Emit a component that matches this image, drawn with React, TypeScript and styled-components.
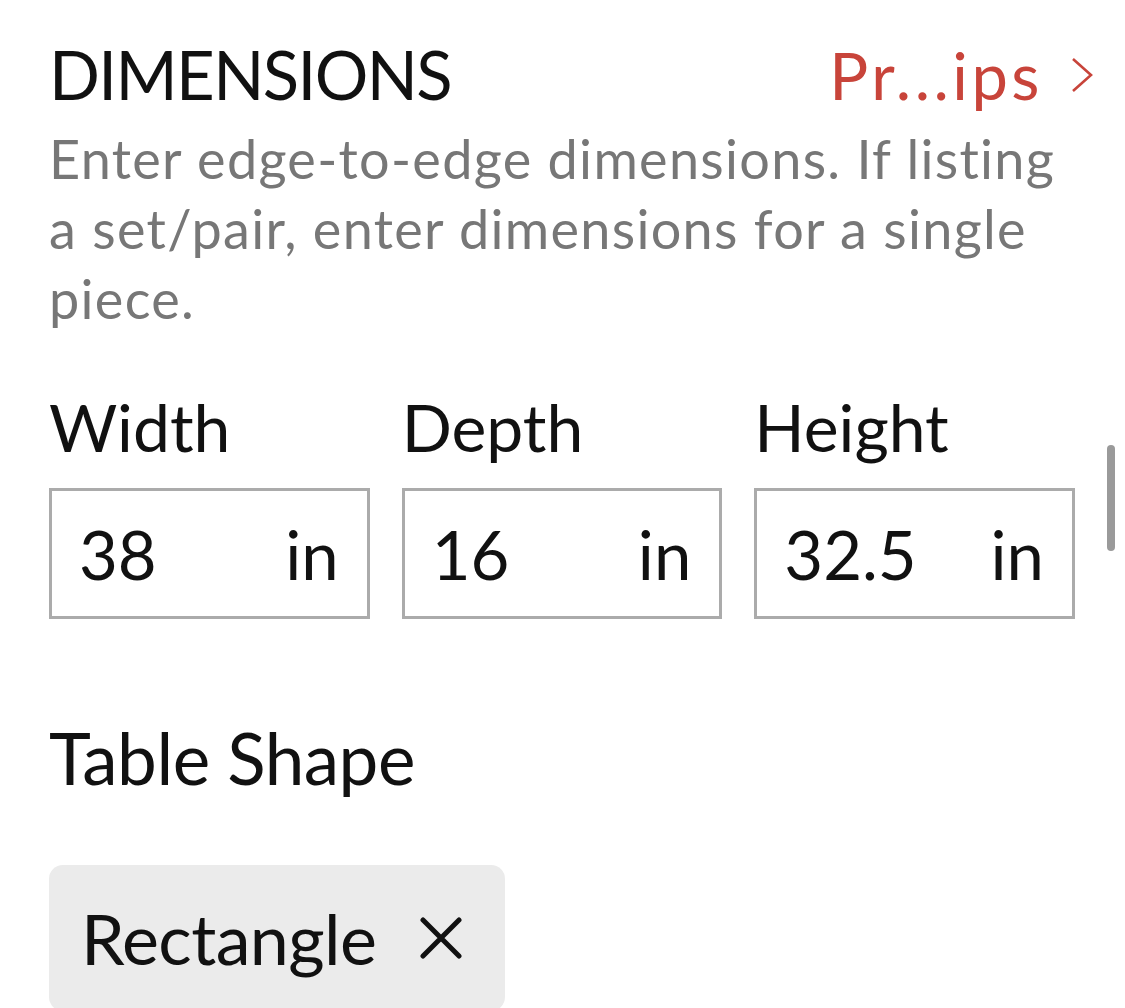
import React from "react";
import styled, { createGlobalStyle } from "styled-components";

const GlobalStyle = createGlobalStyle`
  html, body {
    margin: 0;
    padding: 0;
    background: #ffffff;
  }
  body {
    font-family: "Lato", "Noto Sans", sans-serif;
    color: #111111;
    overflow: hidden;
  }
`;

const Page = styled.div`
  position: relative;
  width: 1125px;
  height: 1008px;
  box-sizing: border-box;
  padding: 34px 50px 0 49px;
  overflow: hidden;
`;

const HeaderRow = styled.div`
  display: flex;
  justify-content: space-between;
  align-items: baseline;
`;

const Title = styled.h2`
  margin: 0;
  font-size: 67px;
  font-weight: 400;
  line-height: 80px;
  letter-spacing: -1.6px;
  color: #111;
`;

const TipsLink = styled.a`
  display: flex;
  align-items: center;
  gap: 28px;
  font-size: 65px;
  line-height: 80px;
  letter-spacing: 3.5px;
  color: #c8443a;
  text-decoration: none;
  margin-right: -18px;
`;

const Description = styled.p`
  margin: 9px 0 0;
  font-size: 54px;
  line-height: 70px;
  letter-spacing: 1.3px;
  color: #777777;
`;

const FieldRow = styled.div`
  display: grid;
  grid-template-columns: repeat(3, 1fr);
  column-gap: 32px;
  margin-top: 53px;
`;

const Field = styled.div`
  display: flex;
  flex-direction: column;
`;

const FieldLabel = styled.label`
  font-size: 66px;
  line-height: 80px;
  color: #111;
  margin-bottom: 21px;
`;

const InputBox = styled.div`
  display: flex;
  align-items: center;
  justify-content: space-between;
  height: 131px;
  box-sizing: border-box;
  border: 3px solid #ababab;
  padding: 0 28px 0 27px;
  font-size: 67px;
  color: #111;
`;

const SectionLabel = styled.h3`
  margin: 99px 0 0;
  font-size: 71px;
  font-weight: 400;
  line-height: 80px;
  letter-spacing: -0.5px;
  color: #111;
`;

const Chip = styled.div`
  display: inline-flex;
  align-items: center;
  gap: 44px;
  margin-top: 67px;
  height: 146px;
  box-sizing: border-box;
  padding: 0 43px 0 32px;
  background: #ebebeb;
  border-radius: 14px;
  font-size: 70px;
  letter-spacing: -0.6px;
  color: #111;
`;

const Scrollbar = styled.div`
  position: absolute;
  top: 445px;
  right: 10px;
  width: 8px;
  height: 106px;
  border-radius: 4px;
  background: #9a9a9a;
`;

const fields = [
  { label: "Width", value: "38" },
  { label: "Depth", value: "16" },
  { label: "Height", value: "32.5" },
];

const Chevron = () => (
  <svg width="22" height="36" viewBox="0 0 22 36" fill="none">
    <path d="M2 2 L20 18 L2 34" stroke="#c8443a" strokeWidth="2.6" />
  </svg>
);

const CloseIcon = () => (
  <svg width="42" height="42" viewBox="0 0 42 42" fill="none">
    <path
      d="M3 3 L39 39 M39 3 L3 39"
      stroke="#111"
      strokeWidth="5"
      strokeLinecap="round"
    />
  </svg>
);

export default function App() {
  return (
    <>
      <GlobalStyle />
      <Page>
        <HeaderRow>
          <Title>DIMENSIONS</Title>
          <TipsLink href="#">
            Pr...ips
            <Chevron />
          </TipsLink>
        </HeaderRow>
        <Description>
          Enter edge-to-edge dimensions. If listing a set/pair, enter dimensions
          for a single piece.
        </Description>
        <FieldRow>
          {fields.map((f) => (
            <Field key={f.label}>
              <FieldLabel>{f.label}</FieldLabel>
              <InputBox>
                <span>{f.value}</span>
                <span>in</span>
              </InputBox>
            </Field>
          ))}
        </FieldRow>
        <SectionLabel>Table Shape</SectionLabel>
        <Chip>
          <span>Rectangle</span>
          <CloseIcon />
        </Chip>
        <Scrollbar />
      </Page>
    </>
  );
}
